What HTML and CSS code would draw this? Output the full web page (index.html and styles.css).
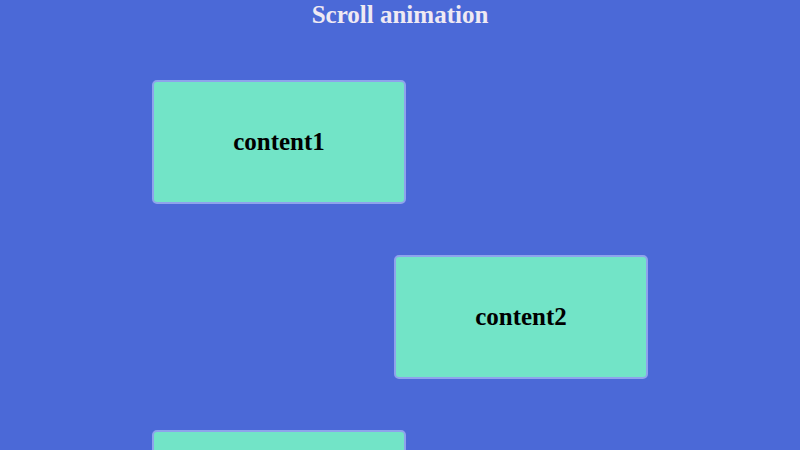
FILE: index.html
```html
<!DOCTYPE html>
<html>
<head>
<meta charset="utf-8">
<link rel="stylesheet" href="styles.css">
</head>
<body>
<h1 class="title">Scroll animation</h1>
<div class="list">
  <div class="box left"><h2>content1</h2></div>
  <div class="box right"><h2>content2</h2></div>
  <div class="box left"><h2>content3</h2></div>
</div>
</body>
</html>
```
FILE: styles.css
```css
html, body {
  margin: 0;
  padding: 0;
  background: #4b69d7;
  overflow: hidden;
  height: 450px;
}
body {
  font-family: "Liberation Serif", "Times New Roman", serif;
}
.title {
  margin: 0;
  height: 28px;
  padding-top: 1px;
  text-align: center;
  color: #efe9f3;
  font-size: 25px;
  line-height: 28px;
  font-weight: bold;
}
.list {
  display: flex;
  flex-direction: column;
  gap: 51px;
  padding-top: 51px;
}
.box {
  box-sizing: border-box;
  width: 254px;
  height: 124px;
  background: #72e4c7;
  border: 2px solid #8ea3ec;
  border-radius: 5px;
  display: flex;
  align-items: center;
  justify-content: center;
}
.box.left { margin-left: 152px; }
.box.right { margin-left: 394px; }
.box h2 {
  margin: 0;
  font-size: 25px;
  font-weight: bold;
  color: #000;
}
```
